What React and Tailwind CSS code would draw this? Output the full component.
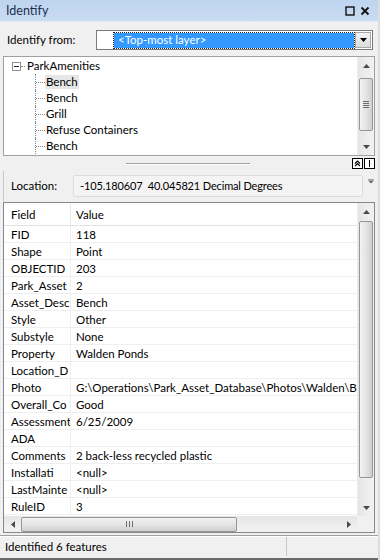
import React from "react";

const rows = [
  ["FID", "118"],
  ["Shape", "Point"],
  ["OBJECTID", "203"],
  ["Park_Asset", "2"],
  ["Asset_Desc", "Bench"],
  ["Style", "Other"],
  ["Substyle", "None"],
  ["Property", "Walden Ponds"],
  ["Location_D", ""],
  ["Photo", "G:\\Operations\\Park_Asset_Database\\Photos\\Walden\\Bench"],
  ["Overall_Co", "Good"],
  ["Assessment", "6/25/2009"],
  ["ADA", ""],
  ["Comments", "2 back-less recycled plastic"],
  ["Installati", "<null>"],
  ["LastMainte", "<null>"],
  ["RuleID", "3"],
];

function UpArrow() {
  return (
    <svg width="7" height="4" viewBox="0 0 7 4"><path d="M0 4 L3.5 0 L7 4 Z" fill="#4a4a4a" /></svg>
  );
}
function DownArrow() {
  return (
    <svg width="7" height="4" viewBox="0 0 7 4"><path d="M0 0 L3.5 4 L7 0 Z" fill="#4a4a4a" /></svg>
  );
}

function VScroll({ thumbTop, thumbH, grip }) {
  return (
    <div className="w-[17px] h-full flex flex-col bg-gradient-to-r from-[#e6e6e6] to-[#f2f2f2] border-l border-[#ececec]">
      <div className="h-[17px] flex items-center justify-center shrink-0"><UpArrow /></div>
      <div className="flex-1 flex flex-col">
        <div style={{ height: thumbTop }} />
        <div
          className="mx-[1px] rounded-[2px] border border-[#979797] bg-gradient-to-r from-[#f2f2f2] via-[#e4e4e4] to-[#cfcfcf] flex items-center justify-center"
          style={{ height: thumbH }}
        >
          {grip && (
            <div className="flex flex-col gap-[1px]">
              <div className="w-[6px] h-[1px] bg-[#6e6e6e]" />
              <div className="w-[6px] h-[1px] bg-[#6e6e6e]" />
              <div className="w-[6px] h-[1px] bg-[#6e6e6e]" />
              <div className="w-[6px] h-[1px] bg-[#6e6e6e]" />
            </div>
          )}
        </div>
      </div>
      <div className="h-[17px] flex items-center justify-center shrink-0"><DownArrow /></div>
    </div>
  );
}

export default function App() {
  const font = { fontFamily: "Lato, 'Open Sans', sans-serif" };
  return (
    <div
      className="w-[380px] h-[560px] bg-[#f0f0f0] flex flex-col overflow-hidden text-[11.5px] text-black border-r-2 border-[#dcdcdc]"
      style={font}
    >
      {/* Title bar */}
      <div className="h-[22px] shrink-0 bg-gradient-to-b from-[#bed4ef] to-[#cadcf2] flex items-center justify-between pl-[6px] pr-[8px] border-b border-[#e4ecf7]">
        <span className="text-[12.5px] text-[#1b2f4f] pt-[1px]">Identify</span>
        <div className="flex items-center gap-[5px]">
          <svg width="10" height="10" viewBox="0 0 10 10">
            <rect x="1" y="1" width="8" height="8" fill="none" stroke="#111" strokeWidth="1.4" />
          </svg>
          <svg width="10" height="10" viewBox="0 0 10 10">
            <path d="M1.5 1.5 L8.5 8.5 M8.5 1.5 L1.5 8.5" stroke="#111" strokeWidth="1.8" />
          </svg>
        </div>
      </div>

      {/* Identify from */}
      <div className="h-[34px] shrink-0 flex items-center pl-[7px] pr-[5px] pt-[2px]">
        <span className="w-[89px] shrink-0">Identify from:</span>
        <div className="flex-1 h-[20px] border border-[#7a7a7a] bg-white flex items-center pl-[17px] pr-[1px]">
          <div className="flex-1 h-[15px] bg-[#3399ff] outline-1 outline-dotted outline-[#222] text-white flex items-center pl-[4px] leading-none">
            &lt;Top-most layer&gt;
          </div>
          <div className="w-[16px] h-[16px] ml-[1px] border border-[#a8a8a8] bg-gradient-to-b from-[#f4f4f4] to-[#dcdcdc] flex items-center justify-center">
            <svg width="7" height="4" viewBox="0 0 7 4"><path d="M0 0 L3.5 4 L7 0 Z" fill="#000" /></svg>
          </div>
        </div>
      </div>

      {/* Tree */}
      <div className="h-[100px] shrink-0 mx-[3px] border border-[#a0a0a0] bg-white flex">
        <div className="flex-1 pt-[1px] relative">
          {/* ParkAmenities */}
          <div className="h-[16px] flex items-center">
            <div className="ml-[8px] w-[9px] h-[9px] border border-[#919191] bg-white flex items-center justify-center">
              <div className="w-[5px] h-[1px] bg-[#222]" />
            </div>
            <div className="w-[4px] border-t border-dotted border-[#888]" />
            <span className="ml-[2px]">ParkAmenities</span>
          </div>
          {["Bench", "Bench", "Grill", "Refuse Containers", "Bench"].map((t, i) => (
            <div key={i} className="h-[16px] flex items-center">
              <div className="ml-[31px] w-[1px] h-[16px] border-l border-dotted border-[#888]" />
              <div className="w-[9px] border-t border-dotted border-[#888]" />
              <span className={"px-[1px] leading-[14px] " + (i === 0 ? "bg-[#e6e6e6]" : "")}>{t}</span>
            </div>
          ))}
        </div>
        <VScroll thumbTop={4} thumbH={53} grip />
      </div>

      {/* Splitter */}
      <div className="h-[15px] shrink-0 flex items-center relative">
        <div className="ml-[126px] w-[124px] h-[2px] border-t border-[#a0a0a0] border-b-white border-b" />
        <div className="ml-auto mr-[3px] flex gap-[1px] self-start mt-[2px]">
          <div className="w-[11px] h-[11px] border border-black bg-white flex items-center justify-center">
            <svg width="7" height="7" viewBox="0 0 7 7">
              <path d="M1 3.5 L3.5 1 L6 3.5 M1 6 L3.5 3.5 L6 6" stroke="#000" strokeWidth="1.1" fill="none" />
            </svg>
          </div>
          <div className="w-[11px] h-[11px] border border-black bg-white flex items-center justify-center">
            <div className="w-[1px] h-[7px] bg-black" />
          </div>
        </div>
      </div>

      {/* Location */}
      <div className="h-[30px] shrink-0 mx-[3px] flex items-center border-l border-[#c8c8c8]">
        <span className="pl-[7px] w-[69px] shrink-0">Location:</span>
        <div className="w-[290px] h-[22px] rounded-[2px] border border-[#dcdcdc] bg-[#f4f4f4] flex items-center pl-[6px] text-[11px] tracking-[-0.15px]">
          -105.180607&nbsp;&nbsp;40.045821 Decimal Degrees
        </div>
        <div className="ml-[5px] self-start mt-[8px]">
          <svg width="6" height="5" viewBox="0 0 6 5">
            <path d="M0 0 H6" stroke="#555" strokeWidth="1" />
            <path d="M0 1.5 L3 4.5 L6 1.5 Z" fill="#666" />
          </svg>
        </div>
      </div>

      {/* Table */}
      <div className="h-[331px] shrink-0 mx-[3px] mt-[1px] border border-[#828790] bg-white flex flex-col">
        <div className="flex-1 flex min-h-0">
          <div className="flex-1 overflow-hidden flex flex-col min-w-0">
            <div className="h-[23px] shrink-0 flex border-b border-[#e3e3e3] items-center pt-[1px]">
              <div className="w-[67px] pl-[7px] h-full flex items-center border-r border-[#e6e6e6] shrink-0">Field</div>
              <div className="pl-[5px] whitespace-nowrap">Value</div>
            </div>
            {rows.map(([f, v], i) => (
              <div key={i} className="h-[17px] shrink-0 flex border-b border-[#efefef]">
                <div className="w-[67px] pl-[7px] pt-[2px] flex items-center border-r border-[#efefef] shrink-0 whitespace-nowrap overflow-hidden">{f}</div>
                <div className="pl-[5px] pt-[2px] flex items-center whitespace-nowrap">{v}</div>
              </div>
            ))}
          </div>
          <VScroll thumbTop={1} thumbH={257} />
        </div>
        {/* Horizontal scroll */}
        <div className="h-[16px] shrink-0 flex">
          <div className="flex-1 flex items-center bg-gradient-to-b from-[#e6e6e6] to-[#f2f2f2]">
            <div className="w-[17px] flex items-center justify-center">
              <svg width="4" height="7" viewBox="0 0 4 7"><path d="M4 0 L0 3.5 L4 7 Z" fill="#4a4a4a" /></svg>
            </div>
            <div className="w-[216px] h-[15px] rounded-[2px] border border-[#979797] bg-gradient-to-b from-[#f2f2f2] via-[#e4e4e4] to-[#cfcfcf] flex items-center justify-center gap-[1px]">
              <div className="w-[1px] h-[6px] bg-[#6e6e6e]" />
              <div className="w-[1px] h-[6px] bg-[#6e6e6e] ml-[1px]" />
              <div className="w-[1px] h-[6px] bg-[#6e6e6e] ml-[1px]" />
            </div>
            <div className="ml-auto w-[17px] flex items-center justify-center">
              <svg width="4" height="7" viewBox="0 0 4 7"><path d="M0 0 L4 3.5 L0 7 Z" fill="#4a4a4a" /></svg>
            </div>
          </div>
          <div className="w-[17px] bg-[#f0f0f0]" />
        </div>
      </div>

      {/* Status bar */}
      <div className="mt-[2px] flex-1 border-t border-[#a0a0a0] flex items-stretch">
        <div className="flex-1 border-t border-white flex items-center pl-[5px] pb-[2px]">
          <span className="w-[281px] shrink-0">Identified 6 features</span>
          <div className="w-[1px] h-full bg-[#c8c8c8]" />
        </div>
      </div>
      <div className="h-[2px] shrink-0 bg-[#6a6a6a]" />
    </div>
  );
}
